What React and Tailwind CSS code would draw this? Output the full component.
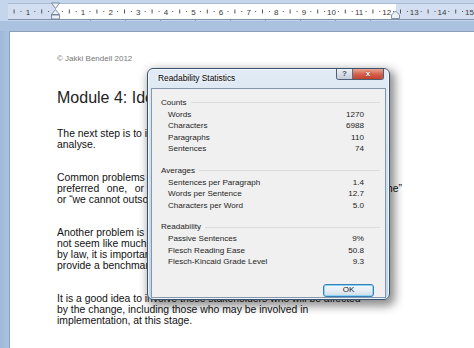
const cm = 27.6;
const zero = 55.5;

function Ruler() {
  const marks = [];
  for (let i = -2; i <= 15; i++) {
    const x = zero + i * cm;
    if (i !== 0 && i !== -2) {
      marks.push(
        <text key={"n" + i} x={x} y={14.6} fontSize="8" textAnchor="middle" fill="#3a3a3a">
          {Math.abs(i)}
        </text>
      );
    }
    [0.25, 0.75].forEach((f) => {
      const dx = x + f * cm;
      if (dx > 9 && dx < 474) marks.push(<rect key={"d" + i + f} x={dx - 0.5} y={11} width={1} height={1} fill="#555" />);
    });
    const tx = x + 0.5 * cm;
    if (tx > 9 && tx < 474) marks.push(<rect key={"t" + i} x={tx - 0.5} y={9.5} width={1} height={4} fill="#555" />);
  }
  return (
    <svg width="474" height="21" className="block">
      <rect x="0" y="0" width="474" height="21" fill="#c4d5ec" />
      <rect x="8" y="4" width="466" height="15" fill="#d3dff0" />
      <rect x="55" y="4" width="341" height="15" fill="#ffffff" />
      <rect x="8" y="19" width="466" height="1" fill="#7f92ac" />
      <rect x="8" y="3" width="466" height="1" fill="#a9bcd6" />
      {marks}
      {/* first line / hanging indent */}
      <polygon points="51.5,3 59.5,3 55.5,8.5" fill="#eef1f5" stroke="#66788e" strokeWidth="0.8" />
      <polygon points="55.5,9.5 51.5,14.5 59.5,14.5" fill="#eef1f5" stroke="#66788e" strokeWidth="0.8" />
      <rect x="51.5" y="15" width="8" height="4" fill="#eef1f5" stroke="#66788e" strokeWidth="0.8" />
      {/* right indent */}
      <polygon points="395.5,11 399.5,15 399.5,18.5 391.5,18.5 391.5,15" fill="#eef1f5" stroke="#66788e" strokeWidth="0.8" />
      {[90, 125, 160, 195, 230, 265, 300, 335, 370].map((x) => (
        <rect key={x} x={x} y={19} width={1} height={2} fill="#8a9bb3" />
      ))}
    </svg>
  );
}

const Line = ({ children, justify }) => (
  <div
    className={
      "h-[10.7px] whitespace-nowrap leading-[10.7px] " +
      (justify ? "w-[345px] text-justify [text-align-last:justify]" : "")
    }
  >
    {children}
  </div>
);

const sections = [
  {
    title: "Counts",
    rows: [
      ["Words", "1270"],
      ["Characters", "6988"],
      ["Paragraphs", "110"],
      ["Sentences", "74"],
    ],
  },
  {
    title: "Averages",
    rows: [
      ["Sentences per Paragraph", "1.4"],
      ["Words per Sentence", "12.7"],
      ["Characters per Word", "5.0"],
    ],
  },
  {
    title: "Readability",
    rows: [
      ["Passive Sentences", "9%"],
      ["Flesch Reading Ease", "50.8"],
      ["Flesch-Kincaid Grade Level", "9.3"],
    ],
  },
];

function Dialog() {
  return (
    <div className="absolute left-[147px] top-[68px] flex h-[232px] w-[243px] flex-col rounded-[6px] border border-[#3b526c] bg-gradient-to-b from-[#e2ebf5] via-[#cddff0] to-[#c0d6ec] px-[3px] pb-[4px] shadow-[inset_0_0_0_1px_rgba(255,255,255,0.7),3px_4px_10px_2px_rgba(0,0,0,0.45)]">
      <div className="relative flex h-[19px] shrink-0 items-center pl-[7px] text-[8.4px] text-black [text-shadow:0_0_6px_white,0_0_3px_white]">
        Readability Statistics
        <div className="absolute right-[2px] top-0 flex h-[11px] overflow-hidden rounded-b-[3px] border border-t-0 border-[#4d5f76]">
          <div className="flex w-[16px] items-center justify-center border-r border-[#5d6f86] bg-gradient-to-b from-[#eef2f7] to-[#c3ccd8] text-[8px] font-bold leading-none text-[#43546a] [text-shadow:none]">
            ?
          </div>
          <div className="flex w-[30px] items-center justify-center bg-gradient-to-b from-[#eaa592] via-[#d66350] to-[#c2412b] text-[8px] font-bold leading-none text-white [text-shadow:0_0_2px_#6b1a10]">
            x
          </div>
        </div>
      </div>
      <div className="flex flex-1 flex-col border border-[#8497ad] bg-[#f0f0f0] pl-[9px] pr-[5px] pt-[8px] text-[8.1px] text-[#1e1e1e]">
        {sections.map((s) => (
          <div key={s.title} className="mb-[10px] last:mb-0">
            <div className="flex h-[11.6px] items-center leading-[11.6px]">
              <span>{s.title}</span>
              <div className="ml-[4px] h-px flex-1 bg-[#dcdcdc]" />
            </div>
            {s.rows.map(([k, v]) => (
              <div key={k} className="flex h-[11.6px] justify-between pl-[7px] pr-[16px] leading-[11.6px]">
                <span>{k}</span>
                <span>{v}</span>
              </div>
            ))}
          </div>
        ))}
        <div className="mr-[6px] mt-[6px] flex justify-end">
          <div className="flex h-[13px] w-[51px] items-center justify-center rounded-[3px] border border-[#3a7fb4] bg-gradient-to-b from-[#f4f8fb] via-[#e4edf4] to-[#cfdde8] shadow-[inset_0_0_0_1px_#8ad3f5]">
            OK
          </div>
        </div>
      </div>
    </div>
  );
}

export default function App() {
  return (
    <div className="relative h-[348px] w-[474px] overflow-hidden bg-[#aac1e0] font-['Liberation_Sans',Arial,sans-serif]">
      <Ruler />
      <div className="flex h-[327px] pt-[10px]">
        <div className="w-[9px] shrink-0 bg-gradient-to-r from-[#9fb8da] to-[#aac2e2]" />
        <div className="flex-1 border-l border-t border-[#8c9fb9] bg-white pl-[47px] pt-[22px] text-[#111]">
          <div className="text-[8px] leading-[10px] text-[#777]">© Jakki Bendell 2012</div>
          <div className="mt-[26px] text-[16px] leading-[16px] text-[#222]">Module 4: Identifying problems</div>
          <div className="mt-[23px] text-[10.4px]">
            <div className="mb-[23px]">
              <Line>The next step is to identify the problems you need to</Line>
              <Line>analyse.</Line>
            </div>
            <div className="mb-[23px]">
              <Line>Common problems include people not wanting to change the</Line>
              <Line justify>preferred one, or being told “we would like to keep it the same”</Line>
              <Line>or “we cannot outsource this because of the costs”.</Line>
            </div>
            <div className="mb-[23px]">
              <Line>Another problem is that the changes may</Line>
              <Line>not seem like much of a priority, but if it is required</Line>
              <Line>by law, it is important to show this and to</Line>
              <Line>provide a benchmark for future reviews.</Line>
            </div>
            <div>
              <Line>It is a good idea to involve those stakeholders who will be affected</Line>
              <Line>by the change, including those who may be involved in</Line>
              <Line>implementation, at this stage.</Line>
            </div>
          </div>
        </div>
      </div>
      <Dialog />
    </div>
  );
}
